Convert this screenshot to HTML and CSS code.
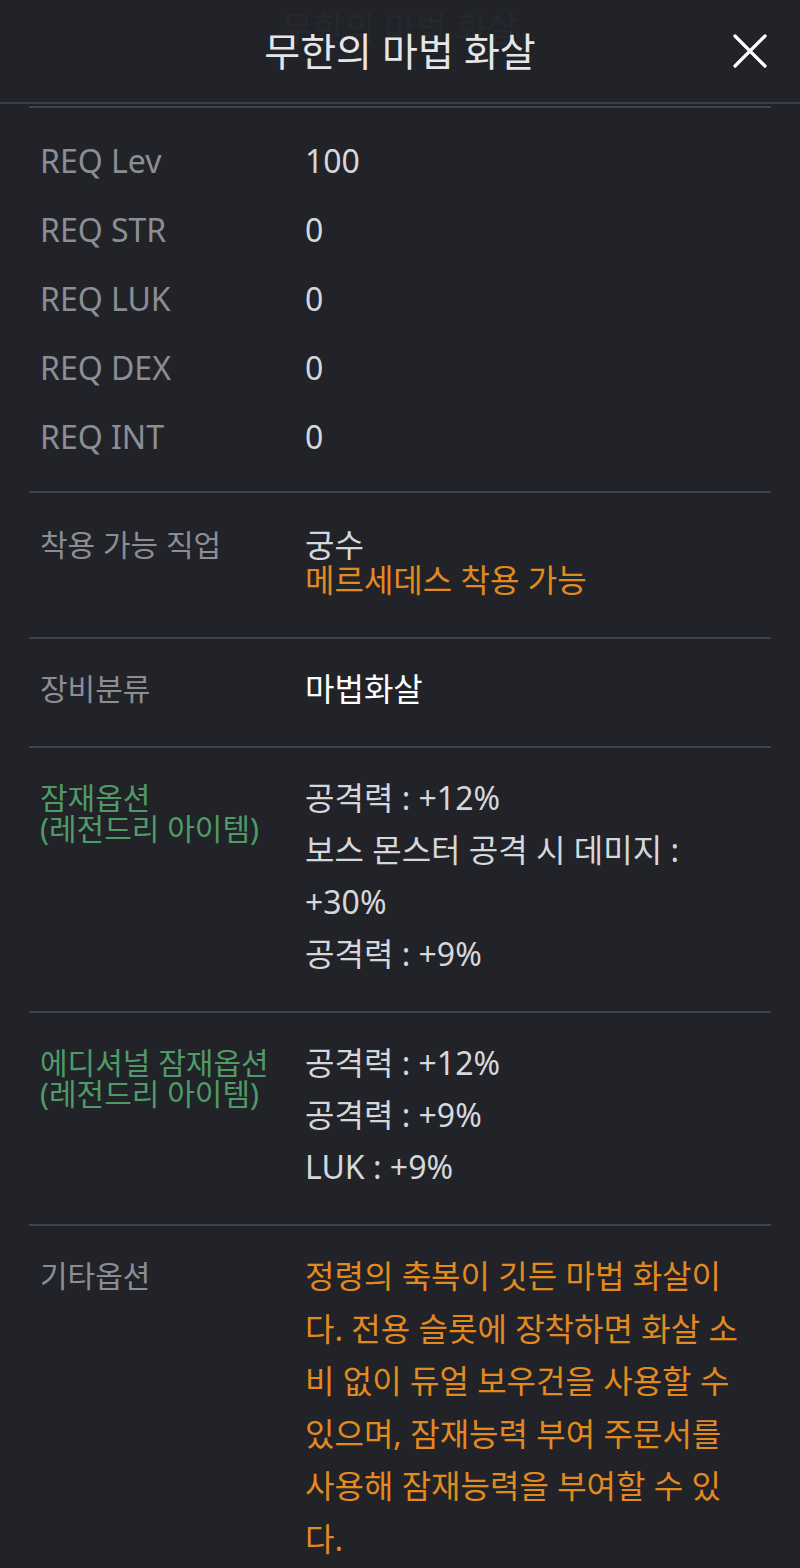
FILE: index.html
```html
<!DOCTYPE html>
<html lang="ko">
<head>
<meta charset="utf-8">
<title>무한의 마법 화살</title>
<link rel="stylesheet" href="styles.css">
</head>
<body>
<header class="topbar">
  <div class="ghost">무한의 마법 화살</div>
  <h1 class="title">무한의 마법 화살</h1>
  <button class="close" aria-label="닫기">
    <svg width="36" height="36" viewBox="0 0 36 36"><path d="M3 3 L33 33 M33 3 L3 33" stroke="#ffffff" stroke-width="3.2" stroke-linecap="round" fill="none"/></svg>
  </button>
</header>
<main class="content">
  <section class="sec req">
    <div class="row"><div class="label">REQ Lev</div><div class="value">100</div></div>
    <div class="row"><div class="label">REQ STR</div><div class="value">0</div></div>
    <div class="row"><div class="label">REQ LUK</div><div class="value">0</div></div>
    <div class="row"><div class="label">REQ DEX</div><div class="value">0</div></div>
    <div class="row"><div class="label">REQ INT</div><div class="value">0</div></div>
  </section>
  <section class="sec job">
    <div class="row"><div class="label">착용 가능 직업</div><div class="value"><div>궁수</div><div class="orange">메르세데스 착용 가능</div></div></div>
  </section>
  <section class="sec std">
    <div class="row"><div class="label">장비분류</div><div class="value bright">마법화살</div></div>
  </section>
  <section class="sec std">
    <div class="row"><div class="label green">잠재옵션<br>(레전드리 아이템)</div><div class="value"><div>공격력 : +12%</div><div>보스 몬스터 공격 시 데미지 : +30%</div><div>공격력 : +9%</div></div></div>
  </section>
  <section class="sec std">
    <div class="row"><div class="label green">에디셔널 잠재옵션<br>(레전드리 아이템)</div><div class="value"><div>공격력 : +12%</div><div>공격력 : +9%</div><div>LUK : +9%</div></div></div>
  </section>
  <section class="sec std etc">
    <div class="row"><div class="label">기타옵션</div><div class="value orange">정령의 축복이 깃든 마법 화살이다. 전용 슬롯에 장착하면 화살 소비 없이 듀얼 보우건을 사용할 수 있으며, 잠재능력 부여 주문서를 사용해 잠재능력을 부여할 수 있다.</div></div>
  </section>
</main>
</body>
</html>
```
FILE: styles.css
```css
html, body {
  margin: 0;
  padding: 0;
  background: #212329;
}
body {
  font-family: "Noto Sans", "Noto Sans CJK KR", sans-serif;
  color: #d6d7db;
  font-size: 32px;
  height: 1568px;
  overflow: hidden;
}
.topbar {
  position: relative;
  height: 102px;
  border-bottom: 2px solid #3a3d46;
  display: flex;
  align-items: center;
  justify-content: center;
  overflow: hidden;
}
.ghost {
  position: absolute;
  top: 8px;
  left: 0;
  right: 0;
  text-align: center;
  font-size: 34px;
  color: #26282e;
  line-height: 40px;
}
.title {
  position: relative;
  margin: 0;
  font-size: 39px;
  font-weight: 400;
  color: #e6e6e9;
  line-height: 50px;
}
.close {
  position: absolute;
  right: 32px;
  top: 33px;
  width: 36px;
  height: 36px;
  padding: 0;
  border: 0;
  background: none;
}
.close svg { display: block; }
.content {
  padding: 2px 29px 0;
}
.sec {
  border-top: 2px solid #40434b;
}
.row {
  display: grid;
  grid-template-columns: 265px 450px;
  padding-left: 11px;
}
.label {
  color: #8c8e94;
  font-size: 30px;
}
.req .label { font-size: 32px; }
.green { color: #4f9b66; }
.orange { color: #e38a1f; }
.bright { color: #ffffff; }

.req { padding: 18px 0 20px; }
.req .row { line-height: 69px; }

.job { padding: 34px 0 40px; }
.job .row { line-height: 35px; }

.std { padding: 24px 0 31px; }
.std .value { line-height: 52px; }
.std .label { line-height: 31px; padding-top: 10px; }
.etc .value { line-height: 52.5px; }
```
